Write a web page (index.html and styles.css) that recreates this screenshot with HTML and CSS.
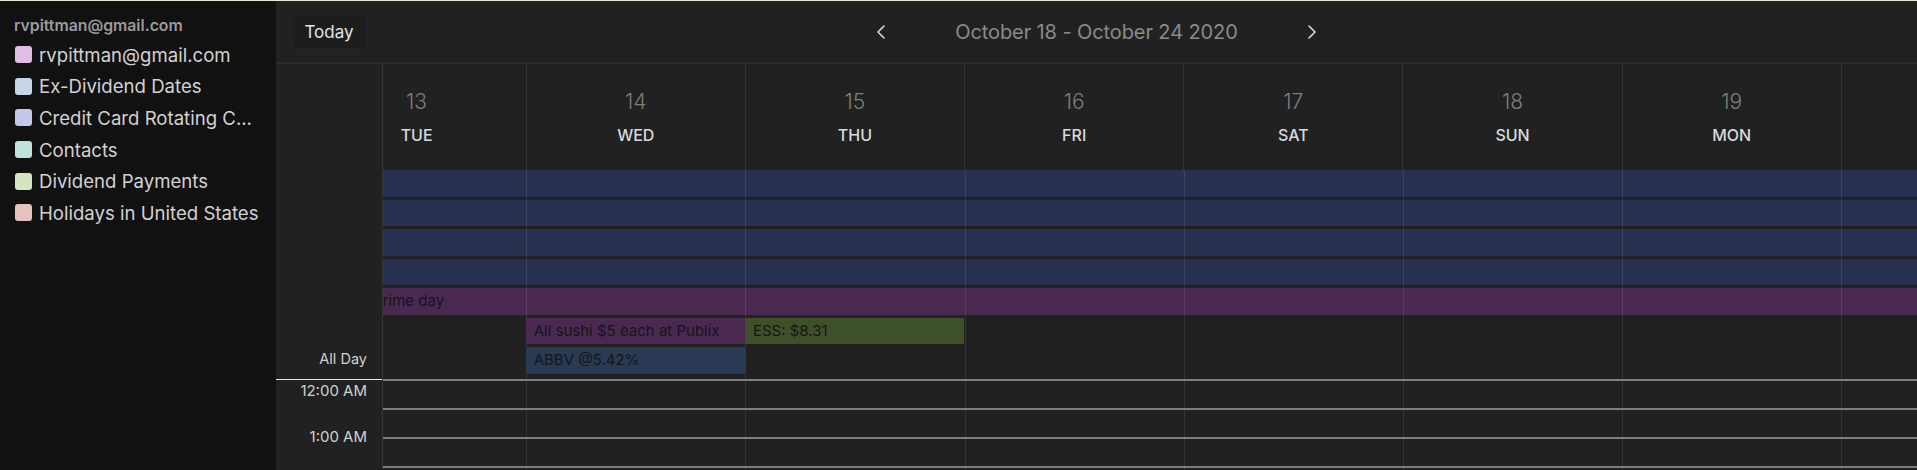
FILE: index.html
```html
<!DOCTYPE html>
<html lang="en">
<head>
<meta charset="utf-8">
<title>Calendar</title>
<link rel="stylesheet" href="styles.css">
</head>
<body>
<div class="app">
  <aside class="sidebar">
    <div class="acct">rvpittman@gmail.com</div>
    <ul class="cals">
      <li class="cal-item"><span class="sw sw-pink"></span>rvpittman@gmail.com</li>
      <li class="cal-item"><span class="sw sw-blue"></span>Ex-Dividend Dates</li>
      <li class="cal-item"><span class="sw sw-lav"></span>Credit Card Rotating C...</li>
      <li class="cal-item"><span class="sw sw-mint"></span>Contacts</li>
      <li class="cal-item"><span class="sw sw-green"></span>Dividend Payments</li>
      <li class="cal-item"><span class="sw sw-rose"></span>Holidays in United States</li>
    </ul>
  </aside>
  <main class="main">
    <header class="topbar">
      <div class="tb-left"><button class="today">Today</button></div>
      <div class="nav">
        <svg class="chev" width="10" height="16" viewBox="0 0 10 16"><polyline points="8,2 2,8 8,14" fill="none" stroke="#dcdcdc" stroke-width="1.6" stroke-linecap="round" stroke-linejoin="round"/></svg>
        <span class="range">October 18 - October 24 2020</span>
        <svg class="chev" width="10" height="16" viewBox="0 0 10 16"><polyline points="2,2 8,8 2,14" fill="none" stroke="#dcdcdc" stroke-width="1.6" stroke-linecap="round" stroke-linejoin="round"/></svg>
      </div>
      <div></div>
    </header>
    <div class="cal">
      <div class="gutter">
        <div class="g-head"></div>
        <div class="g-allday"><span class="g-label">All Day</span></div>
        <div class="g-times">
          <div class="t t-first">12:00 AM</div>
          <div class="t t-next">1:00 AM</div>
        </div>
      </div>
      <div class="days">
        <div class="days-inner">
          <div class="day-heads">
            <div class="dh"><div class="dnum">13</div><div class="dname">TUE</div></div>
            <div class="dh"><div class="dnum">14</div><div class="dname">WED</div></div>
            <div class="dh"><div class="dnum">15</div><div class="dname">THU</div></div>
            <div class="dh"><div class="dnum">16</div><div class="dname">FRI</div></div>
            <div class="dh"><div class="dnum">17</div><div class="dname">SAT</div></div>
            <div class="dh"><div class="dnum">18</div><div class="dname">SUN</div></div>
            <div class="dh"><div class="dnum">19</div><div class="dname">MON</div></div>
            <div class="dh"></div>
          </div>
          <div class="allday">
            <div class="bar bar-blue span-all"></div>
            <div class="bar bar-blue span-all"></div>
            <div class="bar bar-blue span-all"></div>
            <div class="bar bar-blue span-all"></div>
            <div class="bar bar-purple span-all prime">prime day</div>
            <div class="bar bar-purple col2 row6">All sushi $5 each at Publix</div>
            <div class="bar bar-green col3 row6">ESS: $8.31</div>
            <div class="bar bar-teal col2 row7">ABBV @5.42%</div>
          </div>
          <div class="timed">
            <div class="slot"></div>
            <div class="slot"></div>
            <div class="slot"></div>
            <div class="slot"></div>
          </div>
        </div>
      </div>
    </div>
  </main>
</div>
</body>
</html>
```

FILE: styles.css
```css
* { box-sizing: border-box; }
html, body { margin: 0; padding: 0; }
body {
  background: #111111;
  border-top: 1px solid #ede4d5;
  font-family: Inter, "Noto Sans", sans-serif;
  height: 470px;
  overflow: hidden;
}
.app { display: flex; height: 469px; }

/* Sidebar */
.sidebar {
  width: 276px;
  flex: none;
  background: #111111;
  padding: 15px 0 0 14px;
}
.acct {
  font-size: 15.8px;
  font-weight: 600;
  color: #9b9b9b;
  line-height: 20px;
}
.cals { list-style: none; margin: 3px 0 0; padding: 0; }
.cal-item {
  display: flex;
  align-items: center;
  height: 31.6px;
  font-size: 18.6px;
  color: #d2d2d2;
  gap: 7px;
  padding-left: 1px;
  white-space: nowrap;
}
.sw { width: 17px; height: 17px; border-radius: 3px; flex: none; }
.sw-pink { background: #e0bde3; }
.sw-blue { background: #c3d5e7; }
.sw-lav { background: #c4c7e8; }
.sw-mint { background: #bde4da; }
.sw-green { background: #d3e6bf; }
.sw-rose { background: #e6c1c0; }

/* Main */
.main { flex: 1; background: #212121; min-width: 0; display: flex; flex-direction: column; }
.topbar {
  height: 63px;
  border-bottom: 2px solid #2b2b2b;
  display: grid;
  grid-template-columns: 1fr auto 1fr;
  align-items: center;
}
.tb-left { padding-left: 15px; }
.today {
  width: 76px;
  height: 35px;
  background: #1d1d1d;
  border: 1px solid #252525;
  border-radius: 5px;
  color: #e4e4e4;
  font-family: Inter, sans-serif;
  font-size: 17px;
  padding: 0;
}
.nav { display: flex; align-items: center; gap: 69px; }
.chev { display: block; }
.range { font-size: 20px; color: #8a8a8a; letter-spacing: -0.1px; }

.cal { display: flex; flex: 1; min-height: 0; }
.gutter { width: 107px; flex: none; border-right: 1px solid #363636; }
.g-head { height: 106px; }
.g-allday {
  height: 209px;
  display: flex;
  align-items: flex-end;
  justify-content: flex-end;
  padding: 0 15px 10px 0;
}
.g-label { font-size: 14.5px; color: #cfcfcf; line-height: 20px; }
.g-times { border-top: 1px solid #e6e6e6; }
.t {
  font-size: 15px;
  color: #d0d0d0;
  line-height: 20px;
  text-align: right;
  padding-right: 15px;
}
.t-first { margin-top: 1px; }
.t-next { margin-top: 26px; }

.days { flex: 1; overflow: hidden; min-width: 0; }
.days-inner { width: 1753.6px; margin-left: -76.5px; }

.day-heads {
  display: grid;
  grid-template-columns: repeat(8, 219.2px);
  height: 106px;
}
.dh { border-left: 1px solid #343434; text-align: center; padding-top: 25px; }
.dnum { font-size: 21px; font-weight: 300; color: #7d7d7d; line-height: 26px; }
.dname { font-size: 16px; font-weight: 500; color: #d6dbdf; line-height: 20px; margin-top: 10px; }

.allday {
  height: 209px;
  display: grid;
  grid-template-columns: repeat(8, 219.2px);
  grid-auto-rows: 26.5px;
  row-gap: 3px;
  align-content: start;
  background-image: repeating-linear-gradient(to right, #343434 0 1px, transparent 1px 219.2px);
}
.bar {
  font-size: 15px;
  line-height: 26.5px;
  color: #17141a;
  padding-left: 8px;
  white-space: nowrap;
  overflow: hidden;
}
.span-all {
  grid-column: 1 / -1;
  background-image: repeating-linear-gradient(to right, rgba(255,255,255,0.09) 0 1px, transparent 1px 219.2px);
}
.bar-blue { background-color: #283150; }
.bar-purple { background-color: #4a2951; }
.bar-green { background-color: #3e5029; }
.bar-teal { background-color: #293a52; }
.prime { padding-left: 67px; }
.col2 { grid-column: 2; }
.col3 { grid-column: 3; }
.row6 { grid-row: 6; }
.row7 { grid-row: 7; }

.timed {
  background-image: repeating-linear-gradient(to right, #343434 0 1px, transparent 1px 219.2px);
}
.slot { height: 29px; border-top: 2px solid #7e7e7e; }
```
